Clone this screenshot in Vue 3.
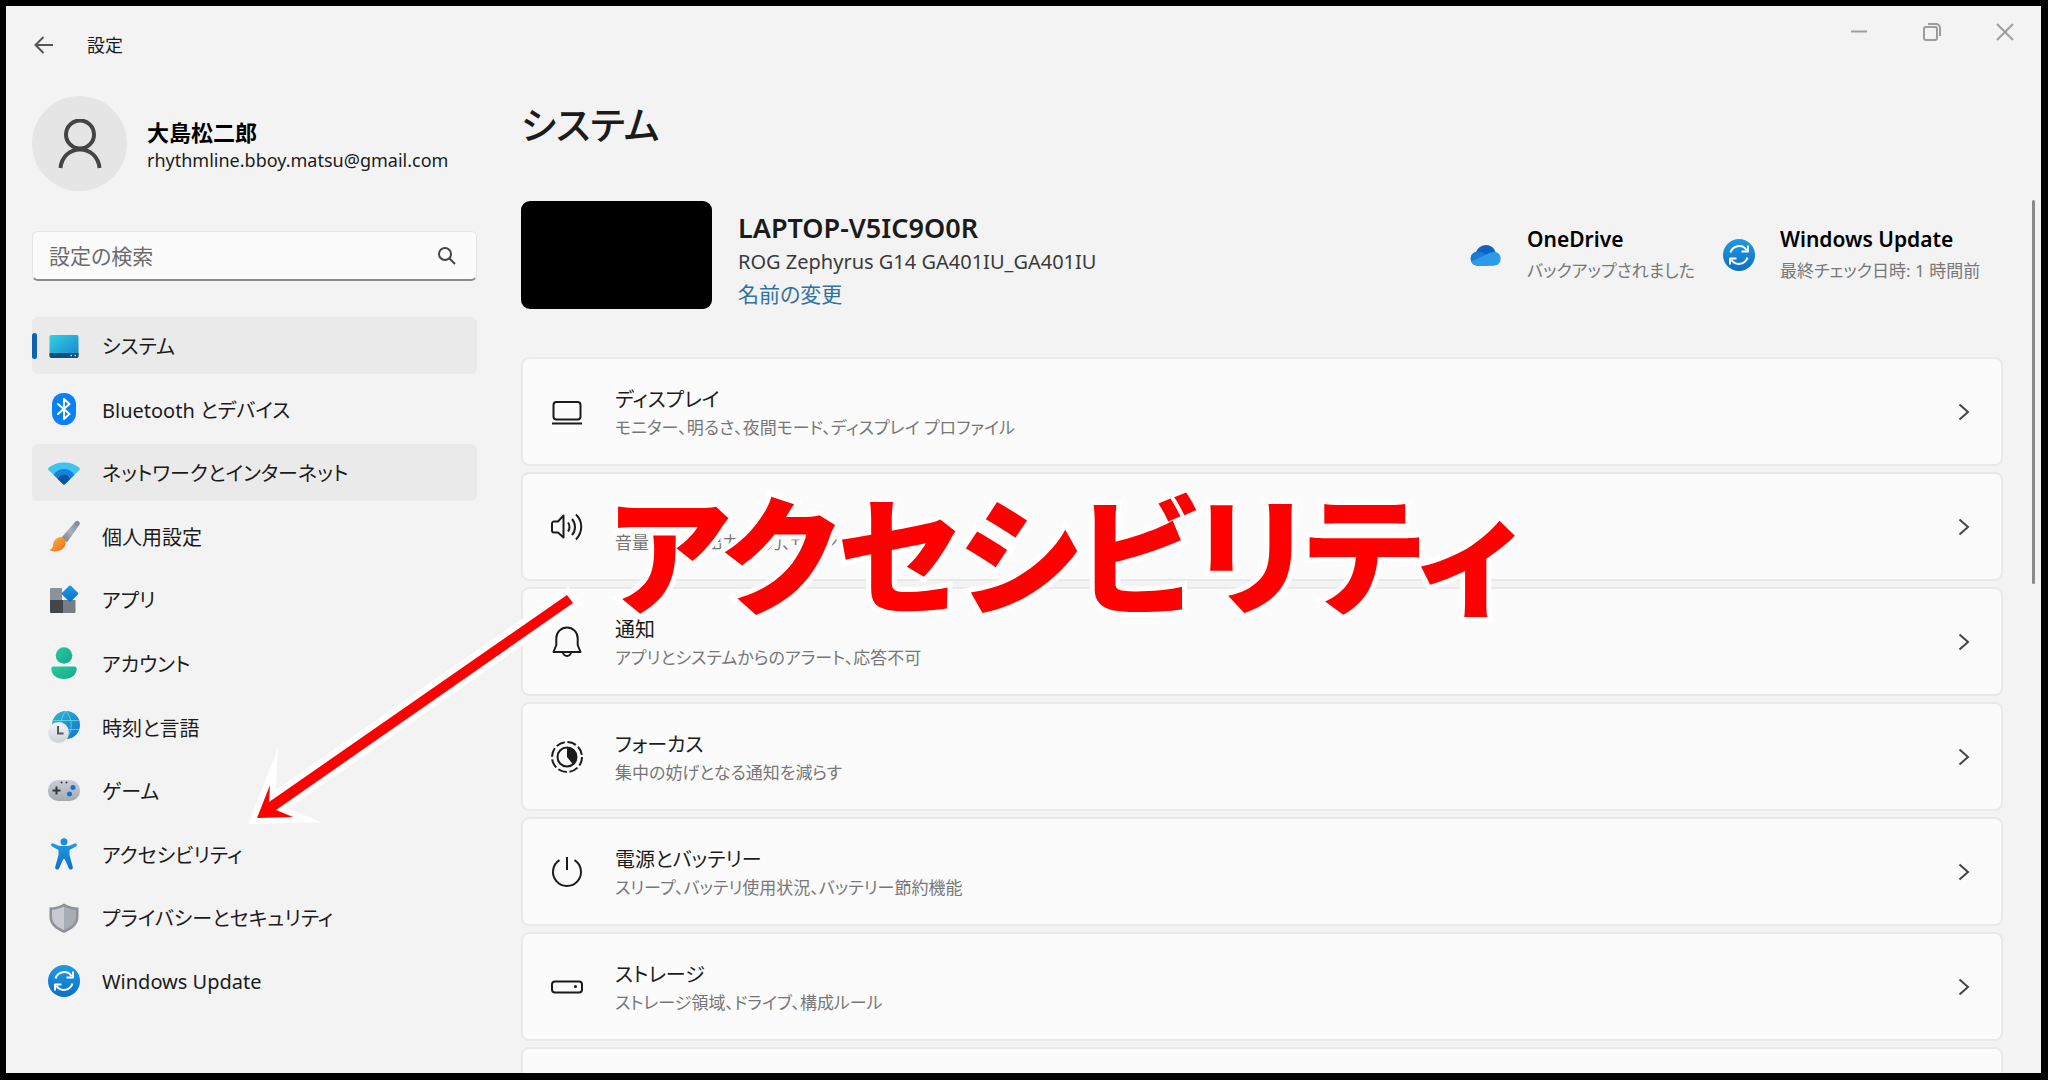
<script setup>
import { ref } from 'vue';

const search = ref('');

const navItems = [
  { icon: 'system', label: 'システム', state: 'current' },
  { icon: 'bluetooth', label: 'Bluetooth とデバイス' },
  { icon: 'network', label: 'ネットワークとインターネット', state: 'hovered' },
  { icon: 'brush', label: '個人用設定' },
  { icon: 'apps', label: 'アプリ' },
  { icon: 'account', label: 'アカウント' },
  { icon: 'time', label: '時刻と言語' },
  { icon: 'game', label: 'ゲーム' },
  { icon: 'accessibility', label: 'アクセシビリティ' },
  { icon: 'shield', label: 'プライバシーとセキュリティ' },
  { icon: 'update', label: 'Windows Update' },
];

const cards = [
  { icon: 'display', title: 'ディスプレイ', text: 'モニター、明るさ、夜間モード、ディスプレイ プロファイル' },
  { icon: 'sound', title: 'サウンド', text: '音量レベル、出力、入力、サウンド デバイス' },
  { icon: 'bell', title: '通知', text: 'アプリとシステムからのアラート、応答不可' },
  { icon: 'focus', title: 'フォーカス', text: '集中の妨げとなる通知を減らす' },
  { icon: 'power', title: '電源とバッテリー', text: 'スリープ、バッテリ使用状況、バッテリー節約機能' },
  { icon: 'storage', title: 'ストレージ', text: 'ストレージ領域、ドライブ、構成ルール' },
  { icon: '', title: '', text: '' },
];
</script>

<template>
  <div class="window">
    <svg class="sprite" width="0" height="0" aria-hidden="true">
      <defs>
        <linearGradient id="g-screen" x1="0" y1="0" x2="1" y2="1">
          <stop offset="0" stop-color="#33d0e2" />
          <stop offset="1" stop-color="#1583d2" />
        </linearGradient>
        <linearGradient id="g-blue" x1="0" y1="0" x2="0" y2="1">
          <stop offset="0" stop-color="#1f9ae3" />
          <stop offset="1" stop-color="#0c70c6" />
        </linearGradient>
        <linearGradient id="g-handle" x1="1" y1="0" x2="0" y2="1">
          <stop offset="0" stop-color="#7c8187" />
          <stop offset="0.5" stop-color="#a9b0b8" />
          <stop offset="1" stop-color="#777c83" />
        </linearGradient>
        <linearGradient id="g-bristle" x1="0" y1="0" x2="1" y2="1">
          <stop offset="0" stop-color="#ffb546" />
          <stop offset="1" stop-color="#ef6a14" />
        </linearGradient>
        <linearGradient id="g-green" x1="0" y1="0" x2="1" y2="1">
          <stop offset="0" stop-color="#2acb9d" />
          <stop offset="1" stop-color="#12a88d" />
        </linearGradient>
        <linearGradient id="g-globe" x1="0" y1="0" x2="1" y2="1">
          <stop offset="0" stop-color="#2dbbd0" />
          <stop offset="1" stop-color="#1272cf" />
        </linearGradient>
        <linearGradient id="g-pad" x1="0" y1="0" x2="0" y2="1">
          <stop offset="0" stop-color="#cbcfd5" />
          <stop offset="1" stop-color="#a4a9b0" />
        </linearGradient>
        <linearGradient id="g-clock" x1="0" y1="0" x2="0" y2="1">
          <stop offset="0" stop-color="#f4f5f6" />
          <stop offset="1" stop-color="#cfd2d6" />
        </linearGradient>
      </defs>

      <symbol id="system" viewBox="0 0 32 32">
        <rect x="1.500" y="5" width="29" height="23" rx="2" fill="url(#g-screen)" />
        <path d="M1.500 23h29v3a2 2 0 0 1-2 2h-25a2 2 0 0 1-2-2z" fill="#0f4f7c" />
        <path d="M22.500 25.500H24M26.500 25.500H28" stroke="#b9e4f7" stroke-width="1.500" />
      </symbol>
      <symbol id="bluetooth" viewBox="0 0 32 32">
        <rect x="4" y="0" width="24" height="32" rx="11.500" fill="#0a80f5" />
        <path d="M10 11l11.500 10-5.500 5V6l5.500 5L10 21" fill="none" stroke="#fff" stroke-width="2" stroke-linejoin="round" stroke-linecap="round" />
      </symbol>
      <symbol id="network" viewBox="0 0 32 32">
        <path d="M.800 13.200a1.800 1.800 0 0 1 .1-2.700C5 7.400 10 5.500 16 5.500s11 1.900 15.100 5a1.800 1.800 0 0 1 .1 2.700L17 27a1.400 1.400 0 0 1-2 0z" fill="#3fc3ef" />
        <path d="M5.500 17.700C8 14 12 12 16 12s8 2 10.500 5.700L17 27a1.400 1.400 0 0 1-2 0z" fill="#1583dc" />
        <path d="M10 22.200C11 19 13.500 17.600 16 17.600s5 1.400 6 4.600l-5 4.800a1.400 1.400 0 0 1-2 0z" fill="#0b55a5" />
      </symbol>
      <symbol id="brush" viewBox="0 0 32 32">
        <path d="M27.500 1.500a2.600 2.600 0 0 1 3.900 3.300L19 22.500l-5.500-5z" fill="url(#g-handle)" />
        <path d="M9.500 18c3-2 6-.5 7.500 1.500 1.500 3 .5 7-2.500 9.500-4 3-10 3-13.500 1 3-1 4-2.500 4-5 .2-3 1.500-5.500 4.500-7z" fill="url(#g-bristle)" />
      </symbol>
      <symbol id="apps" viewBox="0 0 32 32">
        <path d="M3 4h11v12H2V5a1 1 0 0 1 1-1z" fill="#8c9299" />
        <path d="M2 16h13v13H3a1 1 0 0 1-1-1z" fill="#43474c" />
        <path d="M15 16h12.500v12a1 1 0 0 1-1 1H15z" fill="#787e85" />
        <path d="M20.900 1.900a1.600 1.600 0 0 1 2.200 0l6.600 6.600a1.600 1.600 0 0 1 0 2.200l-6.600 6.600a1.600 1.600 0 0 1-2.200 0l-6.600-6.600a1.600 1.600 0 0 1 0-2.200z" fill="url(#g-blue)" />
      </symbol>
      <symbol id="account" viewBox="0 0 32 32">
        <circle cx="16" cy="8.500" r="8.300" fill="url(#g-green)" />
        <path d="M5.500 19.500h21a2.200 2.200 0 0 1 2.200 2.200c0 6.300-5.700 10.300-12.700 10.300S3.300 28 3.300 21.700a2.200 2.200 0 0 1 2.200-2.200z" fill="url(#g-green)" />
      </symbol>
      <symbol id="time" viewBox="0 0 32 32">
        <circle cx="18" cy="14" r="14" fill="url(#g-globe)" />
        <path d="M5 9.500h26M5 18.500h26M18 0c-7 8-7 20 0 28M18 0c7 8 7 20 0 28" fill="none" stroke="#7bdcf0" stroke-width="1" opacity="0.700" />
        <circle cx="10.500" cy="21.500" r="10.500" fill="url(#g-clock)" />
        <path d="M10 15v7.500h5.500" fill="none" stroke="#55595e" stroke-width="2" />
      </symbol>
      <symbol id="game" viewBox="0 0 32 32">
        <rect x="0" y="5" width="32" height="21" rx="10" fill="url(#g-pad)" />
        <path d="M4.500 15.500h8M8.500 11.500v8" stroke="#34383d" stroke-width="2" />
        <circle cx="25" cy="12.500" r="2.500" fill="#1272cf" />
        <circle cx="21.500" cy="19" r="2.500" fill="#1272cf" />
        <circle cx="13.500" cy="7.500" r="1" fill="#34383d" />
        <circle cx="18.500" cy="7.500" r="1" fill="#34383d" />
      </symbol>
      <symbol id="accessibility" viewBox="0 0 32 32">
        <circle cx="16" cy="3.700" r="3.500" fill="#1b8de0" />
        <path d="M5.300 5.400c2.500 1 4.700 2.300 7.700 2.600h6c3-.3 5.200-1.600 7.700-2.600 2-.6 3.100 2.200 1.200 3.200L21.500 12v5l3.300 12c.4 2.600-3 3.600-4 1.200L16.700 21h-1.400l-4.100 9.200c-1 2.400-4.400 1.400-4-1.200L10.500 17v-5L4.100 8.600c-1.900-1-.8-3.800 1.200-3.200z" fill="url(#g-blue)" />
      </symbol>
      <symbol id="shield" viewBox="0 0 32 32">
        <path d="M16 1.500c4.500 2.800 9 4 14.500 4V15c0 7.500-5.500 12-14.500 16C7 27 1.500 22.500 1.500 15V5.500c5.500 0 10-1.200 14.500-4z" fill="#8d9198" />
        <path d="M16 4.500v23.700C8.500 24.700 4 20.800 4 15V7.700c4.500-.2 8.300-1.200 12-3.200z" fill="#c7cbd1" />
        <path d="M16 4.500v23.700c7.500-3.500 12-7.400 12-13.200V7.700c-4.500-.2-8.300-1.200-12-3.200z" fill="#a8acb3" />
      </symbol>
      <symbol id="update" viewBox="0 0 32 32">
        <circle cx="16" cy="16" r="16" fill="url(#g-blue)" />
        <path d="M7.500 13.500a9 9 0 0 1 16-2.500M24.500 18.500a9 9 0 0 1-16 2.500M25 6.500v6h-6.500M7 25.500v-6h6.500" fill="none" stroke="#fff" stroke-width="2" stroke-linejoin="round" />
      </symbol>
      <symbol id="cloud" viewBox="0 0 32 32">
        <path d="M7 26.500a7 7 0 0 1-.8-13.800C7.800 9 11.500 6 16 6c4.700 0 8.300 3 9.500 7.300l-2 13.200z" fill="#0f62bd" />
        <path d="M7 26.500a7 7 0 0 1-.8-13.800c3-.8 5.300 0 8 1.800l8 5-5 7z" fill="#1a7bd6" />
        <path d="M1.200 22.500L18 14.700c2-1.200 4.500-2 7-1.600a6.800 6.800 0 0 1 0 13.400H7c-2.500 0-4.800-1.500-5.800-4z" fill="#2c9be8" />
      </symbol>

      <symbol id="display" viewBox="0 0 32 32">
        <rect x="2.500" y="6" width="27" height="17.500" rx="3" class="line" />
        <path d="M1 27.500h30" class="line" />
      </symbol>
      <symbol id="sound" viewBox="0 0 32 32">
        <path d="M12.500 4.500v22L7 21.500H3A2 2 0 0 1 1 19.500v-7a2 2 0 0 1 2-2h4zM17 11.500c2 2.600 2 6.600 0 9M21 8c4 4.500 4 11.500 0 16M25 3.500c7 7 7 17.500 0 25" class="line" />
      </symbol>
      <symbol id="bell" viewBox="0 0 32 32">
        <path d="M16 1.500A10.700 10.700 0 0 0 5.300 12.200V19l-2.800 7h27l-2.800-7v-6.800A10.700 10.700 0 0 0 16 1.500zM12 26a4 4 0 0 0 8 0" class="line" />
      </symbol>
      <symbol id="focus" viewBox="0 0 32 32">
        <circle cx="16" cy="16" r="15" class="line" stroke-dasharray="9 2.780" />
        <circle cx="16" cy="16" r="9.500" class="line" />
        <path d="M16 6.500a9.500 9.500 0 0 1 6 16.900L16 16z" fill="#1b1b1b" />
      </symbol>
      <symbol id="power" viewBox="0 0 32 32">
        <path d="M8.500 4.200a14 14 0 1 0 15 0M16 1v13" class="line" />
      </symbol>
      <symbol id="storage" viewBox="0 0 32 32">
        <rect x="1" y="10.500" width="30" height="11" rx="3" class="line" />
        <circle cx="24.500" cy="15.500" r="1.500" fill="#1b1b1b" />
      </symbol>
    </svg>

    <header class="titlebar">
      <button class="back" type="button" aria-label="戻る">
        <svg width="20" height="18" viewBox="0 0 20 18"><path d="M9.500 1L1.500 9l8 8M1.500 9H19" /></svg>
      </button>
      <span class="app-name">設定</span>
      <div class="controls">
        <button type="button" aria-label="最小化">
          <svg width="18" height="18" viewBox="0 0 18 18"><path d="M1 8.500h16" /></svg>
        </button>
        <button type="button" aria-label="元に戻す">
          <svg width="18" height="18" viewBox="0 0 18 18">
            <rect x="1" y="4" width="13" height="13" rx="2" />
            <path d="M5 1h8a4 4 0 0 1 4 4v8" />
          </svg>
        </button>
        <button type="button" aria-label="閉じる">
          <svg width="18" height="18" viewBox="0 0 18 18"><path d="M1 1l16 16M17 1L1 17" /></svg>
        </button>
      </div>
    </header>

    <div class="body">
      <aside class="sidebar">
        <div class="profile">
          <div class="avatar">
            <svg width="44" height="50" viewBox="0 0 44 50">
              <circle cx="22" cy="15.500" r="14" />
              <path d="M2.500 49c1-11 9-18.500 19.500-18.500S40.500 38 41.500 49" />
            </svg>
          </div>
          <div class="user">
            <p class="user-name">大島松二郎</p>
            <p class="email">rhythmline.bboy.matsu@gmail.com</p>
          </div>
        </div>

        <label class="search">
          <input v-model="search" type="text" placeholder="設定の検索" aria-label="設定の検索" />
          <svg width="18" height="18" viewBox="0 0 18 18">
            <circle cx="7" cy="7" r="6" />
            <path d="M11.500 11.500L17 17" />
          </svg>
        </label>

        <nav class="nav">
          <a v-for="item of navItems" :key="item.icon" href="#" class="nav-item" :class="item.state">
            <svg class="icon"><use :href="`#${item.icon}`" /></svg>
            <span>{{ item.label }}</span>
          </a>
        </nav>
      </aside>

      <main class="content">
        <h1 class="heading">システム</h1>

        <section class="overview">
          <div class="wallpaper"></div>
          <div class="device">
            <h2 class="device-name">LAPTOP-V5IC9O0R</h2>
            <p class="device-model">ROG Zephyrus G14 GA401IU_GA401IU</p>
            <a href="#" class="rename">名前の変更</a>
          </div>
          <div class="status">
            <svg class="icon"><use href="#cloud" /></svg>
            <div>
              <p class="status-title">OneDrive</p>
              <p class="status-text">バックアップされました</p>
            </div>
          </div>
          <div class="status">
            <svg class="icon"><use href="#update" /></svg>
            <div>
              <p class="status-title">Windows Update</p>
              <p class="status-text">最終チェック日時: 1 時間前</p>
            </div>
          </div>
        </section>

        <div class="cards">
          <button v-for="card of cards" :key="card.icon" type="button" class="card">
            <template v-if="card.icon">
              <svg class="icon"><use :href="`#${card.icon}`" /></svg>
              <span class="card-body">
                <span class="card-title">{{ card.title }}</span>
                <span class="card-text">{{ card.text }}</span>
              </span>
              <svg class="chevron" width="12" height="18" viewBox="0 0 12 18"><path d="M1.500 1.500L10 9l-8.500 7.500" /></svg>
            </template>
          </button>
        </div>
      </main>
    </div>

    <div class="scrollbar"></div>

    <svg class="arrow" width="360" height="260" viewBox="230 580 360 260">
      <path d="M257 818l13-33-1 17L567 595l6 8L276 810l17 7z" />
    </svg>
    <p class="callout">アクセシビリティ</p>
  </div>
</template>

<style>
body {
  background: #000;
}
</style>

<style scoped>
.window {
  position: relative;
  box-sizing: border-box;
  height: 100vh;
  border: 6px solid #000;
  border-right-width: 7px;
  border-bottom-width: 7px;
  display: flex;
  flex-direction: column;
  overflow: hidden;
  background: #f3f3f3;
  color: #1b1b1b;
  font-family: 'Noto Sans', 'Noto Sans CJK JP', sans-serif;
  font-feature-settings: 'palt';
  /* just under regular, so the Japanese face falls to DemiLight */
  font-weight: 390;
}

.sprite {
  position: absolute;
}

.line {
  fill: none;
  stroke: #1b1b1b;
  stroke-width: 2px;
  stroke-linejoin: round;
}

p,
h1,
h2 {
  margin: 0;
  white-space: nowrap;
}

button {
  border: 0;
  padding: 0;
  background: none;
  color: inherit;
  font: inherit;
  font-feature-settings: inherit;
}

a {
  color: inherit;
  text-decoration: none;
}

.icon {
  flex: none;
  width: 32px;
  height: 32px;
}

.titlebar {
  display: flex;
  align-items: center;
  height: 78px;
  padding-left: 28px;
}

.back {
  display: flex;
  margin-right: 33px;
}

.back svg {
  fill: none;
  stroke: #555;
  stroke-width: 2px;
}

.app-name {
  font-size: 18px;
  line-height: 24px;
}

.controls {
  display: flex;
  align-self: flex-start;
  margin-left: auto;
}

.controls button {
  display: flex;
  align-items: center;
  justify-content: center;
  width: 73px;
  height: 52px;
}

.controls svg {
  fill: none;
  stroke: #9c9c9c;
  stroke-width: 2px;
}

.body {
  display: flex;
  flex: 1;
  gap: 44px;
  min-height: 0;
  padding: 0 38px 0 26px;
}

.sidebar {
  display: flex;
  flex-direction: column;
  flex: none;
  width: 445px;
}

.profile {
  display: flex;
  align-items: center;
  gap: 20px;
  padding-top: 12px;
}

.avatar {
  display: flex;
  align-items: center;
  justify-content: center;
  width: 95px;
  height: 95px;
  border-radius: 50%;
  background: #e5e5e5;
}

.avatar svg {
  fill: none;
  stroke: #444;
  stroke-width: 4px;
}

.user {
  padding-top: 4px;
}

.user-name {
  color: #000;
  font-size: 22px;
  font-weight: 700;
  line-height: 28px;
}

.email {
  font-size: 18px;
  line-height: 28px;
}

.search {
  display: flex;
  align-items: center;
  box-sizing: border-box;
  height: 50px;
  margin: 40px 0 36px;
  padding: 0 20px 0 16px;
  border: 1px solid #e5e5e5;
  border-bottom: 2px solid #8a8a8a;
  border-radius: 6px;
  background: #fbfbfb;
}

.search input {
  flex: 1;
  min-width: 0;
  border: 0;
  padding: 0;
  outline: 0;
  background: none;
  font: inherit;
  font-feature-settings: inherit;
  font-size: 21px;
}

.search input::placeholder {
  color: #6b6b6b;
}

.search svg {
  fill: none;
  stroke: #444;
  stroke-width: 2px;
}

.nav {
  display: flex;
  flex: 1;
  flex-direction: column;
  justify-content: space-between;
  padding-bottom: 63px;
}

.nav-item {
  position: relative;
  display: flex;
  align-items: center;
  gap: 22px;
  height: 57px;
  padding-left: 16px;
  border-radius: 6px;
  font-size: 20px;
  white-space: nowrap;
}

.nav-item.current,
.nav-item.hovered {
  background: #eaeaea;
}

.nav-item.current::before {
  content: '';
  position: absolute;
  left: 0;
  width: 5px;
  height: 26px;
  border-radius: 3px;
  background: #1262b3;
}

.content {
  flex: 1;
  min-width: 0;
}

.heading {
  padding-top: 12px;
  font-size: 38px;
  font-weight: 500;
  line-height: 56px;
}

.overview {
  display: flex;
  align-items: center;
  height: 108px;
  margin: 49px 0 48px;
}

.wallpaper {
  width: 191px;
  height: 108px;
  border-radius: 9px;
  background: #000;
}

.device {
  flex: 1;
  padding: 10px 0 0 26px;
}

.device-name {
  font-size: 27px;
  font-weight: 600;
  line-height: 36px;
}

.device-model {
  color: #3a3a3a;
  font-size: 20px;
  line-height: 32px;
}

.rename {
  display: block;
  color: #2f72a3;
  font-size: 21px;
  line-height: 32px;
}

.status {
  display: flex;
  align-items: center;
  gap: 25px;
  width: 253px;
}

.status:last-child {
  width: 280px;
}

.status-title {
  color: #000;
  font-size: 21px;
  font-weight: 600;
  line-height: 32px;
}

.status-text {
  color: #777;
  font-size: 17px;
  line-height: 32px;
}

.cards {
  display: flex;
  flex-direction: column;
  gap: 6px;
}

.card {
  display: flex;
  align-items: center;
  box-sizing: border-box;
  flex: none;
  height: 109px;
  padding: 0 31px 0 28px;
  border: 2px solid #e9e9e9;
  border-radius: 8px;
  background: #fbfbfb;
  text-align: left;
  white-space: nowrap;
}

.card-body {
  display: flex;
  flex: 1;
  flex-direction: column;
  padding: 4px 0 0 32px;
}

.card-title {
  font-size: 20px;
  line-height: 28px;
}

.card-text {
  color: #777;
  font-size: 17px;
  line-height: 28px;
}

.chevron {
  fill: none;
  stroke: #444;
  stroke-width: 2px;
}

.scrollbar {
  position: absolute;
  top: 194px;
  right: 6px;
  width: 3px;
  height: 384px;
  border-radius: 2px;
  background: #8a8a8a;
}

.arrow {
  position: absolute;
  top: 574px;
  left: 224px;
}

.arrow path {
  fill: #f00;
  stroke: #fff;
  stroke-width: 12px;
  stroke-miterlimit: 10;
  paint-order: stroke;
}

.callout {
  position: absolute;
  top: 460px;
  left: 603px;
  color: #f00;
  font-size: 128px;
  font-weight: 900;
  line-height: 180px;
  paint-order: stroke;
  -webkit-text-stroke: 10px #fff;
}
</style>
